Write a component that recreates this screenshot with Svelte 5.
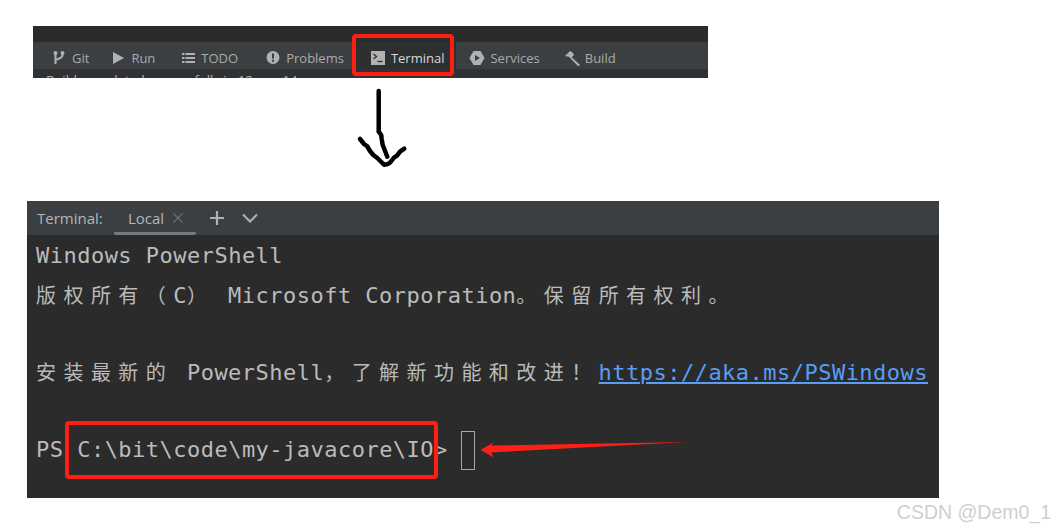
<script>
  const tools = [
    { name: 'Git', icon: 'git' },
    { name: 'Run', icon: 'run' },
    { name: 'TODO', icon: 'todo' },
    { name: 'Problems', icon: 'problems' },
    { name: 'Terminal', icon: 'terminal', active: true },
    { name: 'Services', icon: 'services' },
    { name: 'Build', icon: 'build' }
  ];
</script>

<div class="page">
  <section class="toolwindow">
    <div class="topstrip"></div>
    <div class="toolbar">
      {#each tools as tool}
        <div class="tool" class:active={tool.active}>
          <svg class="icon" width="16" height="16" viewBox="0 0 16 16">
            {#if tool.icon === 'git'}
              <path d="M4.500 2v12M11.500 2v3c0 3-3 3.500-7 5" fill="none" stroke="#afb1b3" stroke-width="2" />
              <circle cx="4.500" cy="3" r="2" fill="#afb1b3" />
              <circle cx="11.500" cy="3" r="2" fill="#afb1b3" />
            {:else if tool.icon === 'run'}
              <path d="M3 2l11 6-11 6z" fill="#afb1b3" />
            {:else if tool.icon === 'todo'}
              <path d="M2 3h2.500v2H2zM5.500 3H15v2H5.500zM2 7h2.500v2H2zM5.500 7H15v2H5.500zM2 11h2.500v2H2zM5.500 11H15v2H5.500z" fill="#afb1b3" />
            {:else if tool.icon === 'problems'}
              <circle cx="8" cy="7.500" r="6.500" fill="#afb1b3" />
              <path d="M7 3.500h2v5H7zM7 9.700h2v2H7z" fill="#3c3f41" />
            {:else if tool.icon === 'terminal'}
              <rect x="1" y="1" width="14" height="14" fill="#afb1b3" />
              <path d="M3.500 4l3 2.500-3 2.500" fill="none" stroke="#2d2f30" stroke-width="1.300" />
              <path d="M7.500 11.500h5" stroke="#2d2f30" stroke-width="1.300" />
            {:else if tool.icon === 'services'}
              <path d="M4.500 1h7L15.500 8l-4 7h-7L.5 8z" fill="#afb1b3" />
              <path d="M6 5l5 3-5 3z" fill="#3c3f41" />
            {:else}
              <path d="M1 6L6 1l2.500 1.500 1.500 2.500-2.500 2.500z" fill="#afb1b3" />
              <path d="M7 6.500l9 8.500-1.500 1.500-9-9z" fill="#afb1b3" />
            {/if}
          </svg>
          <span>{tool.name}</span>
        </div>
      {/each}
    </div>
    <div class="buildlog">Build completed successfully in 12 sec, 14 ms</div>
  </section>

  <section class="terminal">
    <header class="tabs">
      <span class="title">Terminal:</span>
      <div class="tab">
        <span>Local</span>
        <svg width="12" height="12" viewBox="0 0 12 12">
          <path d="M1.500 1.500l9 9M10.500 1.500l-9 9" stroke="#6e7173" stroke-width="1.100" />
        </svg>
      </div>
      <svg class="plus" width="14" height="14" viewBox="0 0 14 14">
        <path d="M7 0v14M0 7h14" stroke="#afb1b3" stroke-width="2.200" />
      </svg>
      <svg class="chevron" width="16" height="10" viewBox="0 0 16 10">
        <path d="M1 1.500l7 7 7-7" fill="none" stroke="#afb1b3" stroke-width="2" />
      </svg>
    </header>
    <div class="console">
      <div class="line">Windows PowerShell</div>
      <div class="line"><span class="cjk">版权所有（</span>C<span class="cjk">）</span> Microsoft Corporation<span class="cjk">。保留所有权利。</span></div>
      <div class="line"></div>
      <div class="line"><span class="cjk">安装最新的</span> PowerShell<span class="cjk">，了解新功能和改进！</span><span class="link">https://aka.ms/PSWindows</span></div>
      <div class="line"></div>
      <div class="line">PS C:\bit\code\my-javacore\IO&gt; <span class="cursor"></span></div>
    </div>
  </section>

  <div class="mark mark-tool"></div>
  <div class="mark mark-path"></div>

  <svg class="overlay" width="1055" height="529" viewBox="0 0 1055 529">
    <g fill="none" stroke="#000" stroke-width="4.500" stroke-linecap="round" stroke-linejoin="round">
      <path d="M378.700 91v40.700l2.500 3.300.5 4 1 6 2 5 2.600 6.700" />
      <path d="M360 139l4 5 3 2 3 5 3.300 4 4 3 3 3 3.700 3.700 3-.5 3-1.500 4-5 3-2 3-4 4.300-3" />
    </g>
    <path d="M480.500 450L494 442 491 445.500 687 442 491 452.500 494 457.500z" fill="#ff2015" />
  </svg>

  <div class="watermark">CSDN @Dem0_1</div>
</div>

<style>
  :global(body) {
    margin: 0;
    background: #fff;
  }

  .page {
    position: relative;
    width: 1055px;
    height: 529px;
    overflow: hidden;
    padding-top: 26px;
    box-sizing: border-box;
  }

  .toolwindow {
    width: 675px;
    height: 52px;
    margin-left: 33px;
    overflow: hidden;
    background: #2f3133;
  }

  .topstrip {
    height: 16px;
    background: #2b2b2b;
  }

  .toolbar {
    display: flex;
    align-items: stretch;
    height: 28px;
    padding-left: 18px;
    background: #3c3f41;
    border-bottom: 1px solid #323232;
    box-sizing: border-box;
    font: 13px "Open Sans", sans-serif;
    color: #a9acae;
  }

  .tool {
    display: flex;
    align-items: center;
    gap: 5px;
    padding-top: 4px;
    box-sizing: border-box;
  }

  .tool:nth-child(2) { margin-left: 21px; }
  .tool:nth-child(3) { margin-left: 25px; }
  .tool:nth-child(4) { margin-left: 27px; }
  .tool:nth-child(6) { margin-left: 13px; }
  .tool:nth-child(7) { margin-left: 24px; }

  .tool.active {
    margin-left: 11px;
    padding-left: 15px;
    padding-right: 12px;
    background: #2d2f30;
    color: #d8d8d8;
  }

  .icon {
    flex: none;
  }

  .buildlog {
    margin: 3px 0 0 13px;
    font: 13px/14px "Open Sans", sans-serif;
    color: #b5b5b5;
  }

  .terminal {
    width: 912px;
    height: 297px;
    margin: 123px 0 0 27px;
    background: #2b2b2b;
  }

  .tabs {
    display: flex;
    align-items: center;
    height: 34px;
    padding-left: 10px;
    background: #3c3f41;
    font: 15px "Open Sans", sans-serif;
    color: #b4b6b8;
  }

  .title {
    width: 67px;
  }

  .tab {
    display: flex;
    align-items: center;
    gap: 8px;
    height: 34px;
    margin-left: 10px;
    padding: 3px 12px 0 14px;
    border-bottom: 3px solid #747a80;
    border-radius: 0 0 2px 2px;
    box-sizing: border-box;
  }

  .plus {
    margin-left: 14px;
  }

  .chevron {
    margin-left: 18px;
  }

  .console {
    padding: 2px 0 0 9px;
    font: 22px/38.800px "DejaVu Sans Mono", monospace;
    letter-spacing: 0.480px;
    color: #bbb;
    white-space: nowrap;
  }

  .line {
    height: 38.800px;
  }

  .cjk {
    font-family: "Noto Sans CJK SC", sans-serif;
    font-size: 20px;
    letter-spacing: 7.440px;
  }

  .link {
    color: #589df6;
    text-decoration: underline;
  }

  .cursor {
    display: inline-block;
    width: 14px;
    height: 39px;
    border: 1px solid #a9a9a9;
    box-sizing: border-box;
    vertical-align: middle;
  }

  .mark {
    position: absolute;
    border: 4px solid #ff1f12;
    border-radius: 4px;
    box-sizing: border-box;
  }

  .mark-tool {
    left: 352px;
    top: 34px;
    width: 102px;
    height: 42px;
  }

  .mark-path {
    left: 65px;
    top: 421px;
    width: 373px;
    height: 58px;
  }

  .overlay {
    position: absolute;
    left: 0;
    top: 0;
    pointer-events: none;
  }

  .watermark {
    position: absolute;
    right: 4px;
    top: 501px;
    font: 19.500px "Liberation Sans", sans-serif;
    color: #cfcfcf;
  }
</style>
